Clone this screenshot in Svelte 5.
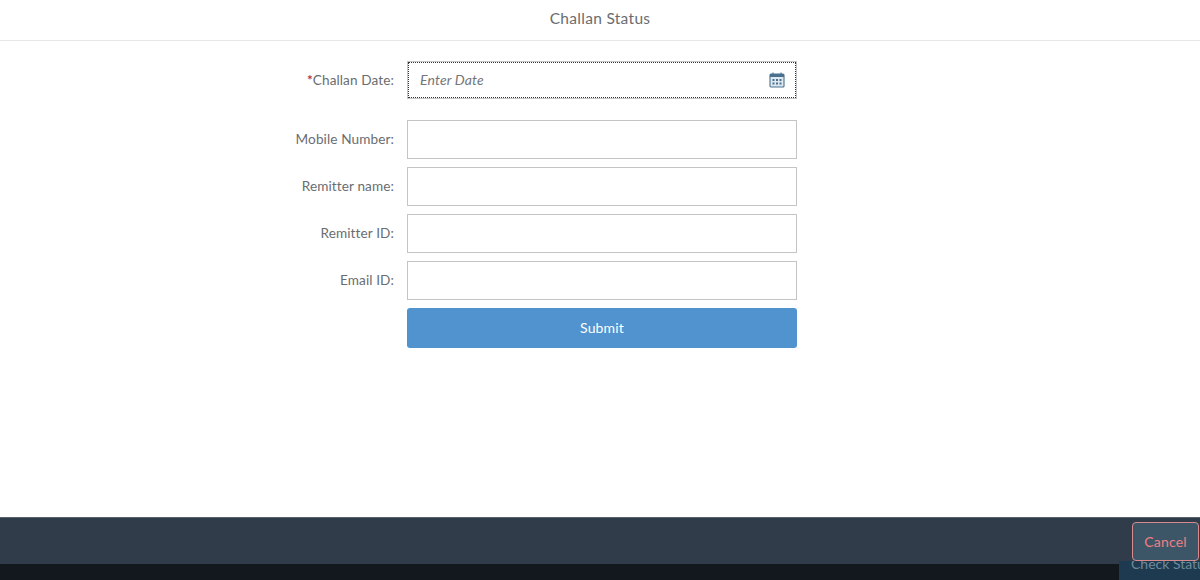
<script>
	const fields = [
		{ label: 'Mobile Number:' },
		{ label: 'Remitter name:' },
		{ label: 'Remitter ID:' },
		{ label: 'Email ID:' }
	];
</script>

<div class="page">
	<header class="title-bar">Challan Status</header>

	<main class="form">
		<div class="row date-row">
			<label class="label" for="challan-date"><span class="required">*</span>Challan Date:</label>
			<div class="date-field">
				<input id="challan-date" type="text" placeholder="Enter Date" />
				<svg class="calendar" width="16" height="16" viewBox="0 0 16 16" aria-hidden="true">
					<rect x="1" y="2" width="14" height="13" rx="1" fill="#dfe8ee" stroke="#4a708f" stroke-width="1.1" />
					<rect x="1" y="2" width="14" height="3" fill="#4a708f" />
					<path d="M4 0.5v2M12 0.5v2" stroke="#4a708f" stroke-width="1.1" />
					<g fill="#4a708f">
						<rect x="3.5" y="7" width="2" height="2" />
						<rect x="7" y="7" width="2" height="2" />
						<rect x="10.5" y="7" width="2" height="2" />
						<rect x="3.5" y="10.5" width="2" height="2" />
						<rect x="7" y="10.5" width="2" height="2" />
						<rect x="10.5" y="10.5" width="2" height="2" />
					</g>
				</svg>
			</div>
		</div>

		{#each fields as field}
			<div class="row">
				<label class="label" for={field.label}>{field.label}</label>
				<input class="text-input" id={field.label} type="text" />
			</div>
		{/each}

		<div class="row">
			<span class="label"></span>
			<button class="submit" type="button">Submit</button>
		</div>
	</main>

	<footer class="footer">
		<button class="cancel" type="button">Cancel</button>
	</footer>

	<div class="under-strip">
		<div class="strip-dark"></div>
		<div class="check-status">Check Status</div>
	</div>
</div>

<style>
	:global(body) {
		margin: 0;
		background: #fff;
		font-family: Lato, 'Noto Sans', sans-serif;
	}

	.page {
		width: 1200px;
		height: 580px;
		display: flex;
		flex-direction: column;
		overflow: hidden;
	}

	.title-bar {
		height: 41px;
		flex: none;
		box-sizing: border-box;
		border-bottom: 1px solid #e8e8e8;
		display: flex;
		align-items: center;
		justify-content: center;
		padding-bottom: 5px;
		font-size: 15.5px;
		color: #6a6d70;
		letter-spacing: 0.3px;
	}

	.form {
		flex: 1;
		padding-top: 20px;
		display: flex;
		flex-direction: column;
		gap: 8px;
	}

	.row {
		display: flex;
		align-items: center;
		gap: 13px;
		padding-left: 200px;
	}

	.date-row {
		margin-bottom: 13px;
	}

	.label {
		width: 194px;
		text-align: right;
		font-size: 13.6px;
		letter-spacing: 0.1px;
		color: #6a6d70;
		padding-bottom: 2px;
	}

	.date-row .label {
		padding-bottom: 0;
	}

	.required {
		color: #c0392b;
		font-weight: 700;
	}

	.date-field {
		width: 390px;
		height: 38px;
		box-sizing: border-box;
		border: 1px solid #c4c4c4;
		outline: 1px dotted #333;
		outline-offset: -2px;
		display: flex;
		align-items: center;
		padding: 0 11px 0 12px;
	}

	.date-field input {
		flex: 1;
		min-width: 0;
		border: none;
		outline: none;
		padding: 0 0 2px;
		background: transparent;
		font-family: inherit;
		font-size: 14px;
		letter-spacing: 0.15px;
	}

	.date-field input::placeholder {
		color: #74777a;
		font-style: italic;
	}

	.text-input {
		width: 390px;
		height: 39px;
		box-sizing: border-box;
		border: 1px solid #c4c4c4;
		background: #fff;
		padding: 0 12px;
	}

	.submit {
		width: 390px;
		height: 40px;
		border: none;
		border-radius: 3px;
		background: #5093cf;
		color: #fff;
		font-family: inherit;
		font-size: 14px;
		letter-spacing: 0.15px;
		padding: 0 0 2px;
	}

	.footer {
		height: 47px;
		flex: none;
		box-sizing: border-box;
		border-top: 1px solid #59636b;
		background: #303c49;
		display: flex;
		align-items: center;
		justify-content: flex-end;
		padding: 4px 1px 3px 0;
	}

	.cancel {
		position: relative;
		z-index: 3;
		width: 67px;
		height: 39px;
		box-sizing: border-box;
		border: 1px solid #d78b8f;
		border-radius: 4px;
		background: #3d5667;
		color: #ee7f83;
		font-family: inherit;
		font-size: 14px;
		letter-spacing: 0.15px;
	}

	.under-strip {
		position: relative;
		z-index: 2;
		height: 19px;
		flex: none;
		margin-top: -3px;
		display: flex;
	}

	.strip-dark {
		flex: 1;
		margin-top: 3px;
		background: #12181d;
	}

	.check-status {
		width: 81px;
		box-sizing: border-box;
		padding-left: 12px;
		background: #1d3a50;
		color: #6d8a9c;
		font-size: 14px;
		line-height: 5px;
		white-space: nowrap;
		overflow: hidden;
	}
</style>
